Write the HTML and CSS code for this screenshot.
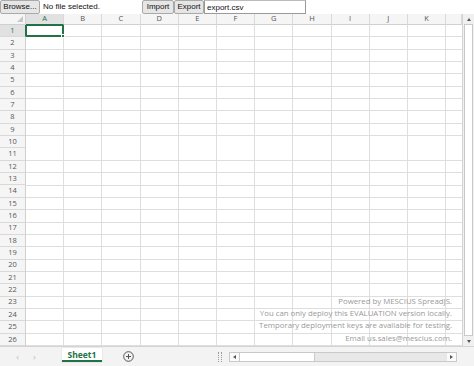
FILE: index.html
```html
<!DOCTYPE html>
<html>
<head>
<meta charset="utf-8">
<link rel="stylesheet" href="styles.css">
</head>
<body>
<div class="toolbar">
  <span class="filebtn">Browse...</span>
  <span class="filename">No file selected.</span>
  <button class="btn">Import</button>
  <button class="btn">Export</button>
  <input class="fname" type="text" value="export.csv">
</div>
<div class="spread">
  <div class="main">
    <div class="sheet">
      <div class="corner"><span class="tri"></span></div>
      <div class="colheads">
        <div class="ch sel">A</div><div class="ch">B</div><div class="ch">C</div><div class="ch">D</div><div class="ch">E</div><div class="ch">F</div><div class="ch">G</div><div class="ch">H</div><div class="ch">I</div><div class="ch">J</div><div class="ch">K</div><div class="ch last"></div>
      </div>
      <div class="rowheads">
        <div class="rh sel">1</div><div class="rh">2</div><div class="rh">3</div><div class="rh">4</div><div class="rh">5</div><div class="rh">6</div><div class="rh">7</div><div class="rh">8</div><div class="rh">9</div><div class="rh">10</div><div class="rh">11</div><div class="rh">12</div><div class="rh">13</div><div class="rh">14</div><div class="rh">15</div><div class="rh">16</div><div class="rh">17</div><div class="rh">18</div><div class="rh">19</div><div class="rh">20</div><div class="rh">21</div><div class="rh">22</div><div class="rh">23</div><div class="rh">24</div><div class="rh">25</div><div class="rh">26</div>
      </div>
      <div class="cells">
        <div class="active"><span class="handle"></span></div>
        <div class="watermark">
          <div>Powered by MESCIUS SpreadJS.</div>
          <div>You can only deploy this EVALUATION version locally.</div>
          <div>Temporary deployment keys are available for testing.</div>
          <div>Email us.sales@mescius.com.</div>
        </div>
      </div>
    </div>
    <div class="vscroll">
      <div class="sbtn"><span class="arr up"></span></div>
      <div class="vthumb"></div>
      <div class="sbtn"><span class="arr down"></span></div>
    </div>
  </div>
  <div class="tabbar">
    <div class="nav"><span class="dot">&#8249;</span><span class="dot">&#8250;</span></div>
    <div class="tab">Sheet1</div>
    <div class="add">
      <svg width="11" height="11" viewBox="0 0 11 11"><circle cx="5.5" cy="5.5" r="4.8" fill="none" stroke="#555" stroke-width="1"/><path d="M5.5 3v5M3 5.5h5" stroke="#555" stroke-width="1"/></svg>
    </div>
    <div class="grip"></div>
    <div class="hscroll">
      <div class="hbtn"><span class="arr left"></span></div>
      <div class="hthumb"></div>
      <div class="htrack"></div>
      <div class="hbtn"><span class="arr right"></span></div>
    </div>
    <div class="cornerbox"></div>
  </div>
</div>
</body>
</html>
```
FILE: styles.css
```css
* { box-sizing: border-box; }
html, body { margin: 0; padding: 0; background: #fff; }
body { width: 474px; height: 366px; overflow: hidden; font-family: "Open Sans", "Liberation Sans", sans-serif; }

.toolbar { height: 14px; display: flex; align-items: stretch; font-family: "Liberation Sans", Arial, sans-serif; font-size: 8px; color: #111; }
.filebtn { width: 40px; display: flex; align-items: center; justify-content: center; background: #e6e6e6; border: 1px solid #a9a9a9; border-radius: 2px; line-height: 1; }
.filename { display: flex; align-items: center; padding-left: 3px; width: 102px; line-height: 1; }
.btn { font: inherit; margin: 0; padding: 0; background: #e6e6e6; border: 1px solid #a9a9a9; border-radius: 2px; color: #111; line-height: 1; }
.btn:nth-of-type(1) { width: 32px; }
.btn:nth-of-type(2) { width: 30px; }
.fname { font: inherit; width: 102px; margin: 0; padding: 0 2px; border: 1px solid #9a9a9a; border-top-color: #bbb; color: #111; }

.spread { height: 352px; display: flex; flex-direction: column; }
.main { height: 332px; display: flex; }
.sheet { flex: 1; display: grid; grid-template-columns: 26px 1fr; grid-template-rows: 11px 1fr; }

.corner { position: relative; background: #f5f5f5; border-right: 1px solid #d0d0d0; border-bottom: 1px solid #d0d0d0; }
.tri { position: absolute; right: 2px; bottom: 2px; width: 0; height: 0; border-left: 6px solid transparent; border-bottom: 6px solid #c8c8c8; }

.colheads { display: flex; }
.ch { width: 38.2px; flex: none; background: #f5f5f5; border-right: 1px solid #d9d9d9; border-bottom: 1px solid #d0d0d0; font-size: 7.5px; color: #555; display: flex; align-items: center; justify-content: center; line-height: 1; }
.ch.last { flex: 1; width: auto; }
.ch.sel { background: #e1e1e1; color: #217346; border-bottom: 1px solid #217346; }

.rowheads { display: flex; flex-direction: column; }
.rh { flex: 1; background: #f5f5f5; border-right: 1px solid #d0d0d0; border-bottom: 1px solid #d9d9d9; font-size: 7.5px; color: #555; display: flex; align-items: center; justify-content: center; line-height: 1; }
.rh.sel { background: #e1e1e1; color: #217346; border-right: 1px solid #217346; }

.cells { position: relative; overflow: hidden;
  background-image:
    repeating-linear-gradient(to right, transparent 0 37.2px, #dedede 37.2px 38.2px),
    repeating-linear-gradient(to bottom, transparent 0 11.35px, #dedede 11.35px 12.35px);
}
.active { position: absolute; left: -1px; top: -1px; width: 39.2px; height: 13.4px; border: 2px solid #217346; }
.handle { position: absolute; right: -3px; bottom: -3px; width: 4px; height: 4px; background: #217346; border: 1px solid #fff; }

.watermark { position: absolute; right: 10px; bottom: 2px; text-align: right; font-size: 7.8px; line-height: 12.35px; color: #999; white-space: nowrap; }

.vscroll { width: 12px; display: flex; flex-direction: column; background: #f0f0f0; border-left: 1px solid #d4d4d4; padding: 0 1px; }
.sbtn { height: 10px; display: flex; align-items: center; justify-content: center; }
.vthumb { flex: 1; background: #fff; border: 1px solid #c9c9c9; }
.arr { width: 0; height: 0; display: block; }
.arr.up { border-left: 2.5px solid transparent; border-right: 2.5px solid transparent; border-bottom: 3px solid #555; }
.arr.down { border-left: 2.5px solid transparent; border-right: 2.5px solid transparent; border-top: 3px solid #555; }
.arr.left { border-top: 2.5px solid transparent; border-bottom: 2.5px solid transparent; border-right: 3px solid #555; }
.arr.right { border-top: 2.5px solid transparent; border-bottom: 2.5px solid transparent; border-left: 3px solid #555; }

.tabbar { height: 20px; display: flex; align-items: center; background: #f3f3f3; border-top: 1px solid #d4d4d4; }
.nav { width: 62px; display: flex; justify-content: center; gap: 14px; padding-right: 10px; }
.dot { font-size: 9px; color: #bbb; line-height: 1; }
.tab { width: 40px; height: 14px; margin-top: -3px; background: #fff; color: #217346; font-weight: bold; font-size: 8.5px; display: flex; align-items: center; justify-content: center; border-bottom: 2px solid #217346; box-shadow: 0 0 0 0.5px #e0e0e0; }
.add { width: 52px; display: flex; justify-content: center; }
.grip { width: 4px; height: 10px; margin-left: 64px; margin-right: 7px; border-left: 1px dotted #999; border-right: 1px dotted #999; }
.hscroll { width: 228px; height: 10px; display: flex; border: 1px solid #c9c9c9; background: #e8e8e8; }
.hbtn { width: 9px; display: flex; align-items: center; justify-content: center; background: #fafafa; }
.hthumb { width: 76px; background: #fff; border-left: 1px solid #c9c9c9; border-right: 1px solid #c9c9c9; }
.htrack { flex: 1; }
.cornerbox { flex: 1; }
```
